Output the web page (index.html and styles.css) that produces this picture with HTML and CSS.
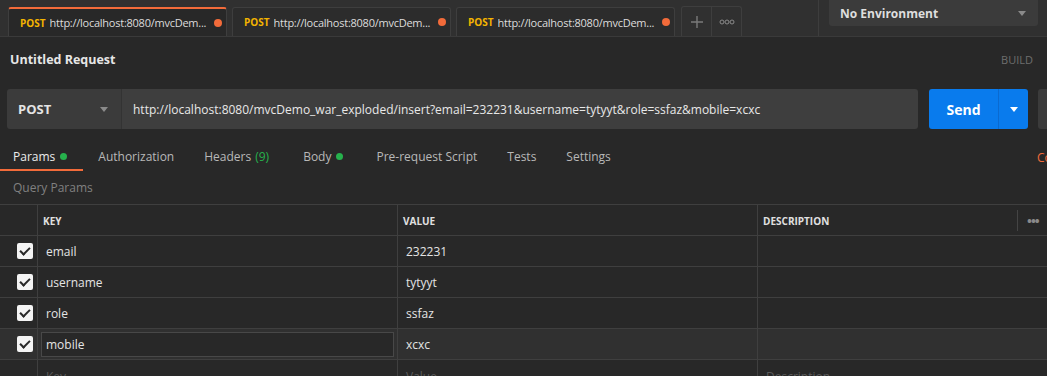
FILE: index.html
```html
<!DOCTYPE html>
<html>

<head>
	<title>Untitled Request</title>
	<link rel="stylesheet" href="styles.css">
</head>

<body>
	<div class="topbar">
		<div class="tabs">
			<div class="tab active">
				<span class="tab-method">POST</span>
				<span class="tab-url">http://localhost:8080/mvcDem...</span>
				<span class="tab-dot"></span>
			</div>
			<div class="tab">
				<span class="tab-method">POST</span>
				<span class="tab-url">http://localhost:8080/mvcDem...</span>
				<span class="tab-dot"></span>
			</div>
			<div class="tab">
				<span class="tab-method">POST</span>
				<span class="tab-url">http://localhost:8080/mvcDem...</span>
				<span class="tab-dot"></span>
			</div>
			<div class="tab-tools">
				<div class="tab-tool">
					<svg width="14" height="14" viewBox="0 0 14 14"><path d="M7 1v12M1 7h12" stroke="#7a7a7a" stroke-width="1.4"/></svg>
				</div>
				<div class="tab-tool">
					<svg width="16" height="6" viewBox="0 0 16 6"><circle cx="3" cy="3" r="2" fill="none" stroke="#8a8a8a"/><circle cx="8" cy="3" r="2" fill="none" stroke="#8a8a8a"/><circle cx="13" cy="3" r="2" fill="none" stroke="#8a8a8a"/></svg>
				</div>
			</div>
		</div>
		<div class="env-wrap">
			<div class="env">
				<span>No Environment</span>
				<span class="caret"></span>
			</div>
		</div>
	</div>

	<div class="request-head">
		<div class="title">Untitled Request</div>
		<div class="build">BUILD</div>
	</div>

	<div class="url-row">
		<div class="method">
			<span>POST</span>
			<span class="caret"></span>
		</div>
		<div class="url">http://localhost:8080/mvcDemo_war_exploded/insert?email=232231&amp;username=tytyyt&amp;role=ssfaz&amp;mobile=xcxc</div>
		<div class="send">
			<span class="send-label">Send</span>
			<span class="send-arrow"><span class="caret white"></span></span>
		</div>
		<div class="save"></div>
	</div>

	<div class="req-tabs">
		<div class="req-tab current">Params <span class="dot"></span></div>
		<div class="req-tab">Authorization</div>
		<div class="req-tab">Headers <span class="count">(9)</span></div>
		<div class="req-tab body-tab">Body <span class="dot"></span></div>
		<div class="req-tab script-tab">Pre-request Script</div>
		<div class="req-tab">Tests</div>
		<div class="req-tab">Settings</div>
		<div class="spacer"></div>
		<div class="cookies">Cookies</div>
	</div>

	<div class="section-label">Query Params</div>

	<div class="params">
		<div class="row head">
			<div class="cell check"></div>
			<div class="cell">KEY</div>
			<div class="cell">VALUE</div>
			<div class="cell desc">
				<span>DESCRIPTION</span>
				<span class="more">•••</span>
			</div>
		</div>
		<div class="row">
			<div class="cell check"><span class="box"></span></div>
			<div class="cell">email</div>
			<div class="cell">232231</div>
			<div class="cell"></div>
		</div>
		<div class="row">
			<div class="cell check"><span class="box"></span></div>
			<div class="cell">username</div>
			<div class="cell">tytyyt</div>
			<div class="cell"></div>
		</div>
		<div class="row">
			<div class="cell check"><span class="box"></span></div>
			<div class="cell">role</div>
			<div class="cell">ssfaz</div>
			<div class="cell"></div>
		</div>
		<div class="row hover">
			<div class="cell check"><span class="box"></span></div>
			<div class="cell editing"><span class="field">mobile</span></div>
			<div class="cell">xcxc</div>
			<div class="cell"></div>
		</div>
		<div class="row empty">
			<div class="cell check"></div>
			<div class="cell">Key</div>
			<div class="cell">Value</div>
			<div class="cell">Description</div>
		</div>
	</div>
</body>

</html>
```

FILE: styles.css
```css
body {
	margin: 0;
	background-color: #282828;
	color: #e4e4e4;
	font-family: "Open Sans", "Liberation Sans", sans-serif;
	font-size: 12px;
	overflow: hidden;
}

.topbar {
	display: flex;
	height: 36px;
	background-color: #303030;
	border-bottom: 1px solid #3a3a3a;
}

.tabs {
	display: flex;
	align-items: flex-end;
	gap: 5px;
	padding-left: 8px;
	width: 810px;
	border-right: 1px solid #3d3d3d;
}

.tab {
	display: flex;
	align-items: center;
	box-sizing: border-box;
	width: 219px;
	height: 29px;
	padding: 0 4px 0 11px;
	border: 1px solid #3e3e3e;
	border-bottom: none;
	border-radius: 3px 3px 0 0;
	background-color: #2c2c2c;
}

.tab.active {
	background-color: #282828;
	border-top: 2px solid #f26b3a;
}

.tab-method {
	color: #f4b400;
	font-size: 10px;
	font-weight: bold;
	margin-right: 4px;
}

.tab-url {
	flex: 1;
	color: #dcdcdc;
	font-size: 11px;
	letter-spacing: -0.25px;
	white-space: nowrap;
	overflow: hidden;
}

.tab-dot {
	flex-shrink: 0;
	width: 8px;
	height: 8px;
	border-radius: 50%;
	background-color: #f26b3a;
}

.tab-tools {
	display: flex;
	height: 29px;
	margin-left: 1px;
	border: 1px solid #3e3e3e;
	border-bottom: none;
	border-radius: 3px 3px 0 0;
}

.tab-tool {
	display: flex;
	align-items: center;
	justify-content: center;
	width: 29px;
}

.tab-tool + .tab-tool {
	border-left: 1px solid #3e3e3e;
}

.env-wrap {
	flex: 1;
	padding: 0 9px 0 10px;
}

.env {
	display: flex;
	align-items: center;
	justify-content: space-between;
	height: 26px;
	padding: 0 12px 0 11px;
	background-color: #3b3b3b;
	border-radius: 0 0 3px 3px;
	color: #dedede;
	font-weight: bold;
	font-size: 12px;
}

.caret {
	width: 0;
	height: 0;
	border-left: 4px solid transparent;
	border-right: 4px solid transparent;
	border-top: 5px solid #8a8a8a;
}

.caret.white {
	border-top-color: #ffffff;
}

.request-head {
	display: flex;
	justify-content: space-between;
	align-items: center;
	height: 44px;
	padding: 0 14px 0 10px;
}

.title {
	font-weight: bold;
	font-size: 12.5px;
	color: #e6e6e6;
}

.build {
	font-size: 11px;
	color: #6e6e6e;
}

.url-row {
	display: flex;
	height: 40px;
	margin-top: 8px;
	padding-left: 7px;
}

.method {
	display: flex;
	align-items: center;
	justify-content: space-between;
	width: 115px;
	box-sizing: border-box;
	padding: 0 13px 0 11px;
	background-color: #3b3b3b;
	border-radius: 3px 0 0 3px;
	border-right: 1px solid #333333;
	font-weight: bold;
	font-size: 13px;
	color: #e4e4e4;
}

.url {
	display: flex;
	align-items: center;
	width: 796px;
	padding-left: 11px;
	box-sizing: border-box;
	background-color: #3e3e3e;
	border-radius: 0 3px 3px 0;
	color: #e8e8e8;
	white-space: nowrap;
	overflow: hidden;
}

.send {
	display: flex;
	margin-left: 11px;
	width: 99px;
	background-color: #097bed;
	border-radius: 3px;
	color: #ffffff;
	font-weight: bold;
	font-size: 14px;
}

.send-label {
	display: flex;
	align-items: center;
	justify-content: center;
	width: 69px;
	border-right: 1px solid #0a6ad0;
}

.send-arrow {
	display: flex;
	align-items: center;
	justify-content: center;
	flex: 1;
}

.save {
	margin-left: 10px;
	flex: 1;
	background-color: #3b3b3b;
	border-radius: 3px 0 0 3px;
}

.req-tabs {
	display: flex;
	height: 33px;
	margin-top: 9px;
	color: #b8b8b8;
}

.req-tab {
	display: flex;
	align-items: center;
	box-sizing: border-box;
	padding: 5px 15px 0;
	height: 33px;
	border-bottom: 2px solid transparent;
}

.req-tab:first-child {
	padding: 5px 16px 0 13px;
}

.req-tab.body-tab {
	padding-left: 19px;
}

.req-tab.script-tab {
	padding-left: 18px;
}

.req-tab.current {
	color: #ececec;
	border-bottom-color: #f26b3a;
}

.dot {
	width: 7px;
	height: 7px;
	border-radius: 50%;
	background-color: #26b14c;
	margin-left: 5px;
}

.count {
	color: #26b14c;
	margin-left: 4px;
}

.spacer {
	flex: 1;
}

.cookies {
	display: flex;
	align-items: center;
	padding-top: 5px;
	height: 28px;
	width: 10px;
	overflow: hidden;
	color: #f26b3a;
	white-space: nowrap;
}

.section-label {
	height: 33px;
	line-height: 34px;
	padding-left: 13px;
	color: #808080;
}

.params {
	border-top: 1px solid #3f3f3f;
}

.row {
	display: grid;
	grid-template-columns: 37px 360px 360px 1fr;
	height: 30px;
	border-bottom: 1px solid #3f3f3f;
}

.row.hover {
	background-color: #303030;
}

.cell {
	display: flex;
	align-items: center;
	padding-left: 8px;
	border-left: 1px solid #3f3f3f;
	white-space: nowrap;
	overflow: hidden;
}

.cell.check {
	border-left: none;
	padding-left: 17px;
}

.row.head .cell {
	font-size: 10px;
	font-weight: bold;
	color: #e0e0e0;
	padding-left: 5px;
	padding-top: 1px;
}

.row.head .cell.desc {
	justify-content: space-between;
	padding-right: 0;
}

.more {
	display: flex;
	align-items: center;
	height: 21px;
	width: 30px;
	padding-left: 9px;
	box-sizing: border-box;
	border-left: 1px solid #444444;
	color: #8a8a8a;
	font-size: 13px;
	letter-spacing: -1px;
}

.box {
	position: relative;
	width: 16px;
	height: 16px;
	border-radius: 2px;
	background-color: #f4f4f4;
}

.box::after {
	content: "";
	position: absolute;
	left: 5px;
	top: 2px;
	width: 4px;
	height: 8px;
	border-right: 2px solid #282828;
	border-bottom: 2px solid #282828;
	transform: rotate(45deg);
}

.cell.editing {
	padding-left: 3px;
}

.field {
	display: flex;
	align-items: center;
	box-sizing: border-box;
	width: 353px;
	height: 25px;
	padding-left: 4px;
	border: 1px solid #484848;
	background-color: #282828;
}

.row.empty .cell {
	color: #5a5a5a;
	align-items: flex-start;
	padding-top: 8px;
}
```
